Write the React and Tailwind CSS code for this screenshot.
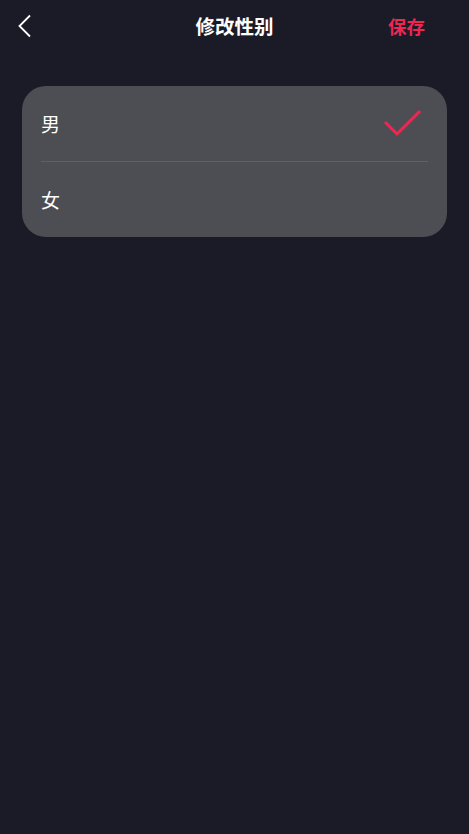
export default function App() {
  const font = { fontFamily: '"Noto Sans CJK SC", "Noto Sans", sans-serif' }
  return (
    <div className="min-h-[834px] w-full bg-[#1a1b27] text-white" style={font}>
      {/* Header */}
      <div className="flex h-[52px] items-center px-[16px]">
        <div className="flex w-[80px] items-center pl-[1px]">
          <svg width="16" height="24" viewBox="0 0 16 24" fill="none">
            <path d="M13 1.5 L2.5 12 L13 22.5" stroke="#fff" strokeWidth="1.8" />
          </svg>
        </div>
        <h1 className="flex-1 text-center text-[19.5px] font-bold leading-none">修改性别</h1>
        <div className="w-[80px] pr-[28px] text-right text-[18.5px] font-bold leading-none text-[#ee2651] whitespace-nowrap">保存</div>
      </div>

      {/* Options */}
      <div className="mx-[22px] mt-[34px] rounded-[24px] bg-[#4d4e54] px-[19px]">
        <div className="flex h-[76px] items-center justify-between border-b border-[#5f6066]">
          <span className="text-[19px] leading-none">男</span>
          <svg width="40" height="30" viewBox="0 0 40 30" className="mr-[5px]">
            <path d="M2 13 L14 25 L37 2" stroke="#ee2651" strokeWidth="3" fill="none" />
          </svg>
        </div>
        <div className="flex h-[75px] items-center">
          <span className="text-[19px] leading-none">女</span>
        </div>
      </div>
    </div>
  )
}
